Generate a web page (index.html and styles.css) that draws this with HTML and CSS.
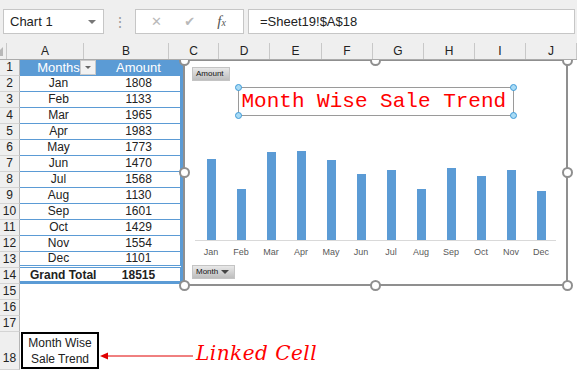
FILE: index.html
```html
<!DOCTYPE html>
<html lang="en">
<head>
<meta charset="UTF-8">
<meta name="viewport" content="width=device-width, initial-scale=1.0">
<title>Linked Cell Chart Title</title>
<link rel="stylesheet" href="styles.css">
</head>
<body>
<div class="page">
    <!-- formula bar -->
    <div class="topbar">
        <div class="namebox">Chart 1<span class="caret"></span></div>
        <div class="grip">&#8942;</div>
        <div class="fbuttons">
            <span class="fb-x">&#10005;</span>
            <span class="fb-ok">&#10004;</span>
            <span class="fb-fx"><i>f</i><small>x</small></span>
        </div>
        <div class="formula">=Sheet19!$A$18</div>
    </div>

    <!-- column headers -->
    <div class="colhead">
        <div class="corner"><span class="tri"></span></div>
        <div class="ch w-a">A</div>
        <div class="ch w-b">B</div>
        <div class="ch w-c">C</div>
        <div class="ch">D</div>
        <div class="ch w-e">E</div>
        <div class="ch">F</div>
        <div class="ch">G</div>
        <div class="ch">H</div>
        <div class="ch">I</div>
        <div class="ch">J</div>
    </div>

    <!-- cells -->
    <div class="sheet">
        <div class="row"><div class="rh">1</div><div class="ca th">Months<span class="filter"></span></div><div class="cb th">Amount</div></div>
        <div class="row"><div class="rh">2</div><div class="ca td">Jan</div><div class="cb td">1808</div></div>
        <div class="row"><div class="rh">3</div><div class="ca td">Feb</div><div class="cb td">1133</div></div>
        <div class="row"><div class="rh">4</div><div class="ca td">Mar</div><div class="cb td">1965</div></div>
        <div class="row"><div class="rh">5</div><div class="ca td">Apr</div><div class="cb td">1983</div></div>
        <div class="row"><div class="rh">6</div><div class="ca td">May</div><div class="cb td">1773</div></div>
        <div class="row"><div class="rh">7</div><div class="ca td">Jun</div><div class="cb td">1470</div></div>
        <div class="row"><div class="rh">8</div><div class="ca td">Jul</div><div class="cb td">1568</div></div>
        <div class="row"><div class="rh">9</div><div class="ca td">Aug</div><div class="cb td">1130</div></div>
        <div class="row"><div class="rh">10</div><div class="ca td">Sep</div><div class="cb td">1601</div></div>
        <div class="row"><div class="rh">11</div><div class="ca td">Oct</div><div class="cb td">1429</div></div>
        <div class="row"><div class="rh">12</div><div class="ca td">Nov</div><div class="cb td">1554</div></div>
        <div class="row"><div class="rh">13</div><div class="ca td last">Dec</div><div class="cb td last">1101</div></div>
        <div class="row"><div class="rh">14</div><div class="ca total">Grand Total</div><div class="cb total">18515</div></div>
        <div class="row"><div class="rh">15</div></div>
        <div class="row"><div class="rh">16</div></div>
        <div class="row"><div class="rh">17</div></div>
        <div class="row tall"><div class="rh">18</div><div class="linked">Month Wise<br>Sale Trend</div></div>
    </div>

    <!-- chart object sitting on the sheet -->
    <div class="chart">
        <div class="field amount">Amount</div>
        <div class="title-box">
            Month Wise Sale Trend
            <span class="th-dot tl"></span><span class="th-dot tr"></span>
            <span class="th-dot bl"></span><span class="th-dot br"></span>
        </div>
        <div class="bars">
            <div class="col"><div class="bar" style="height:81px"></div></div>
            <div class="col"><div class="bar" style="height:51px"></div></div>
            <div class="col"><div class="bar" style="height:88px"></div></div>
            <div class="col"><div class="bar" style="height:89px"></div></div>
            <div class="col"><div class="bar" style="height:80px"></div></div>
            <div class="col"><div class="bar" style="height:66px"></div></div>
            <div class="col"><div class="bar" style="height:70px"></div></div>
            <div class="col"><div class="bar" style="height:51px"></div></div>
            <div class="col"><div class="bar" style="height:72px"></div></div>
            <div class="col"><div class="bar" style="height:64px"></div></div>
            <div class="col"><div class="bar" style="height:70px"></div></div>
            <div class="col"><div class="bar" style="height:49px"></div></div>
        </div>
        <div class="labels">
            <span>Jan</span><span>Feb</span><span>Mar</span><span>Apr</span>
            <span>May</span><span>Jun</span><span>Jul</span><span>Aug</span>
            <span>Sep</span><span>Oct</span><span>Nov</span><span>Dec</span>
        </div>
        <div class="field month">Month<span class="down"></span></div>

        <span class="handle h-tl"></span><span class="handle h-tm"></span><span class="handle h-tr"></span>
        <span class="handle h-ml"></span><span class="handle h-mr"></span>
        <span class="handle h-bl"></span><span class="handle h-bm"></span><span class="handle h-br"></span>
    </div>

    <!-- annotation -->
    <svg class="arrow" width="96" height="10" viewBox="0 0 96 10">
        <line x1="6" y1="5" x2="93" y2="5" stroke="#e00000" stroke-width="1"/>
        <polygon points="0,5 8,1.5 8,8.5" fill="#e00000"/>
    </svg>
    <div class="note">Linked Cell</div>
</div>
</body>
</html>
```

FILE: styles.css
```css
* {
    box-sizing: border-box;
}
body {
    margin: 0;
    font-family: "Liberation Sans", Arial, sans-serif;
    background: #fff;
    color: #222;
}
.page {
    position: relative;
    width: 577px;
    height: 371px;
    overflow: hidden;
}

/* formula bar */
.topbar {
    height: 43px;
    background: #efefef;
    display: flex;
    align-items: center;
    padding: 0 2px 0 3px;
}
.namebox {
    width: 101px;
    height: 25px;
    background: #fff;
    border: 1px solid #c6c6c6;
    font-size: 13px;
    line-height: 23px;
    padding-left: 6px;
    position: relative;
}
.caret {
    position: absolute;
    right: 7px;
    top: 10px;
    border-left: 4px solid transparent;
    border-right: 4px solid transparent;
    border-top: 4px solid #777;
}
.grip {
    width: 31px;
    text-align: center;
    color: #9a9a9a;
    font-size: 14px;
}
.fbuttons {
    width: 109px;
    height: 25px;
    background: #fff;
    border: 1px solid #c6c6c6;
    display: flex;
    align-items: center;
    justify-content: space-around;
    padding: 0 6px 0 4px;
}
.fb-x, .fb-ok {
    color: #b9b9b9;
    font-size: 13px;
    font-family: "DejaVu Sans", sans-serif;
}
.fb-fx {
    color: #555;
    font-family: "Liberation Serif", serif;
    font-size: 15px;
    font-style: italic;
}
.fb-fx small {
    font-size: 10px;
}
.formula {
    flex: 1;
    height: 25px;
    margin-left: 4px;
    background: #fff;
    border: 1px solid #c6c6c6;
    font-size: 13px;
    line-height: 23px;
    padding-left: 11px;
}

/* column headers */
.colhead {
    position: relative;
    z-index: 2;
    height: 17px;
    display: flex;
    background: #efefef;
    border-bottom: 1px solid #ababab;
}
.corner {
    width: 20px;
    border-right: 1px solid #c8c8c8;
    position: relative;
}
.tri {
    position: absolute;
    right: 3px;
    bottom: 3px;
    border-left: 9px solid transparent;
    border-bottom: 9px solid #b8b8b8;
}
.ch {
    width: 51px;
    flex-shrink: 0;
    border-right: 1px solid #c8c8c8;
    font-size: 12px;
    line-height: 16px;
    text-align: center;
}
.ch.w-a { width: 77px; }
.ch.w-b { width: 85px; }
.ch.w-c { width: 50px; }
.ch.w-e { width: 52px; }

/* sheet rows */
.row {
    display: flex;
    height: 16px;
}
.row.tall {
    height: 38px;
}
.rh {
    width: 20px;
    flex-shrink: 0;
    background: #efefef;
    border-right: 1px solid #b5b5b5;
    border-bottom: 1px solid #d4d4d4;
    font-size: 12px;
    line-height: 15px;
    text-align: center;
}
.row.tall .rh {
    line-height: 52px;
}
.ca, .cb {
    font-size: 12px;
    line-height: 15px;
    text-align: center;
    border-bottom: 1px solid #5b9bd5;
}
.ca {
    width: 77px;
    position: relative;
}
.cb {
    width: 86px;
    border-right: 3px solid #5b9bd5;
}
.th {
    background: #5b9bd5;
    color: #fff;
    font-size: 13px;
}
.filter {
    position: absolute;
    right: 1px;
    top: 0;
    width: 16px;
    height: 15px;
    background: #f2f2f2;
    border: 1px solid #c9c9c9;
}
.filter::after {
    content: "";
    position: absolute;
    left: 4px;
    top: 5px;
    border-left: 3px solid transparent;
    border-right: 3px solid transparent;
    border-top: 3px solid #666;
}
.td.last {
    border-bottom: 3px double #5b9bd5;
    line-height: 13px;
}
.total {
    font-weight: bold;
    border-bottom: 3px solid #5b9bd5;
    line-height: 14px;
}
.ca.total {
    text-align: left;
    padding-left: 10px;
}
.linked {
    width: 78px;
    height: 37px;
    margin-left: 1px;
    border: 2px solid #000;
    font-size: 12px;
    line-height: 16px;
    text-align: center;
    padding-top: 1px;
}

/* chart */
.chart {
    position: absolute;
    z-index: 1;
    left: 183px;
    top: 59px;
    width: 385px;
    height: 227px;
    background: #fff;
    border: 2px solid #8f8f8f;
    padding-top: 6px;
}
.field {
    height: 14px;
    margin-left: 7px;
    background: linear-gradient(#e8e8e8, #bdbdbd);
    border: 1px solid #c4c4c4;
    font-size: 8px;
    line-height: 12px;
    padding-left: 3px;
    color: #111;
}
.field.amount {
    width: 38px;
}
.field.month {
    width: 43px;
    margin-top: 6px;
    position: relative;
}
.down {
    position: absolute;
    right: 5px;
    top: 4px;
    border-left: 4px solid transparent;
    border-right: 4px solid transparent;
    border-top: 4px solid #444;
}
.title-box {
    position: relative;
    width: 276px;
    height: 29px;
    margin: 6px auto 0;
    border: 1px solid #9a9a9a;
    color: #ff0000;
    font-family: "Liberation Mono", "Courier New", monospace;
    font-size: 21px;
    line-height: 27px;
    padding-left: 3px;
    white-space: nowrap;
}
.th-dot {
    position: absolute;
    width: 7px;
    height: 7px;
    border-radius: 50%;
    background: #a9dbf5;
    border: 1px solid #3f9bd8;
}
.th-dot.tl { left: -4px; top: -4px; }
.th-dot.tr { right: -4px; top: -4px; }
.th-dot.bl { left: -4px; bottom: -4px; }
.th-dot.br { right: -4px; bottom: -4px; }
.bars {
    display: flex;
    align-items: flex-end;
    width: 361px;
    height: 113px;
    margin: 12px 0 0 10px;
    padding-left: 1px;
    border-bottom: 1px solid #d9d9d9;
}
.col {
    width: 30px;
    display: flex;
    justify-content: center;
}
.bar {
    width: 9px;
    background: #5b9bd5;
}
.labels {
    display: flex;
    margin: 4px 0 0 11px;
}
.labels span {
    width: 30px;
    text-align: center;
    font-size: 9px;
    line-height: 14px;
    color: #595959;
}
.handle {
    position: absolute;
    width: 11px;
    height: 11px;
    border-radius: 50%;
    background: #fff;
    border: 2px solid #8f8f8f;
}
.h-tl { left: -6.5px; top: -6.5px; }
.h-tm { left: 185px; top: -6.5px; }
.h-tr { right: -6.5px; top: -6.5px; }
.h-ml { left: -6.5px; top: 106px; }
.h-mr { right: -6.5px; top: 106px; }
.h-bl { left: -6.5px; bottom: -6.5px; }
.h-bm { left: 185px; bottom: -6.5px; }
.h-br { right: -6.5px; bottom: -6.5px; }

/* linked cell annotation */
.arrow {
    position: absolute;
    left: 100px;
    top: 351px;
}
.note {
    position: absolute;
    left: 196px;
    top: 341px;
    color: #ff0000;
    font-family: "DejaVu Serif", serif;
    font-style: italic;
    font-size: 20px;
    letter-spacing: 0.5px;
}
```
